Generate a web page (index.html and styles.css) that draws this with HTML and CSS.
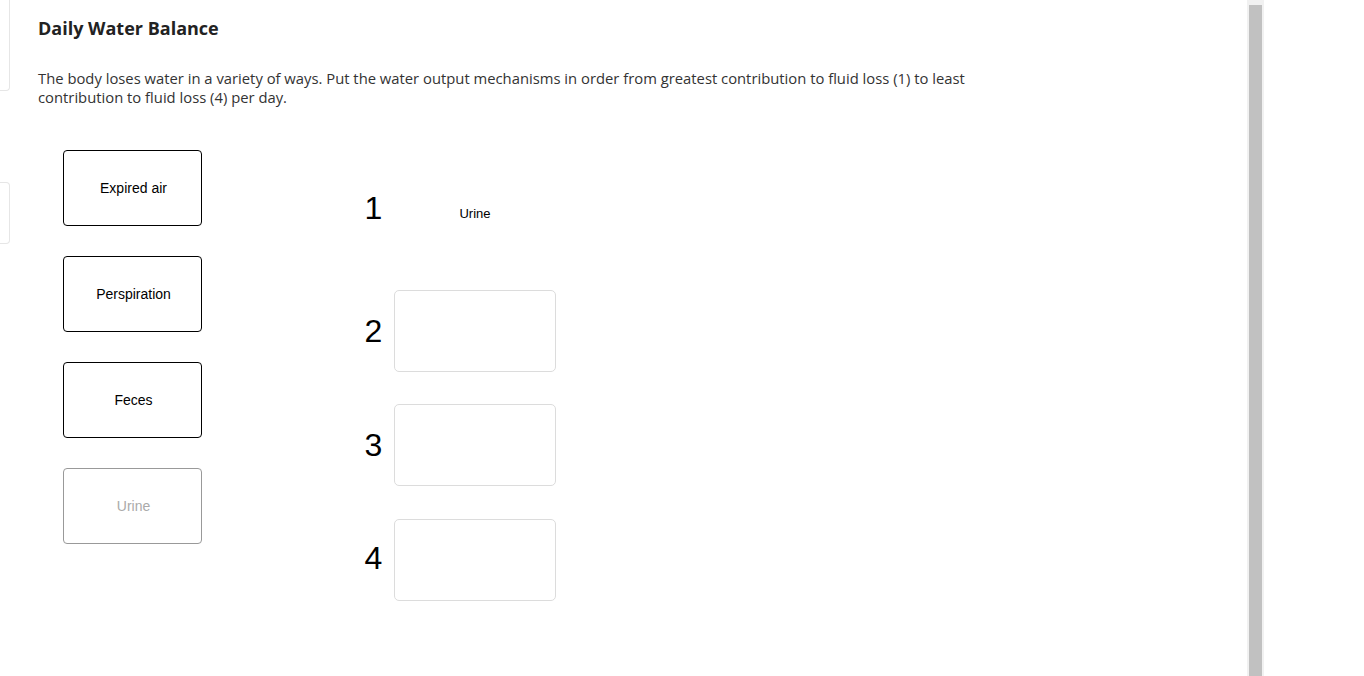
FILE: index.html
```html
<!DOCTYPE html>
<html lang="en">
<head>
<meta charset="utf-8">
<title>Daily Water Balance</title>
<link rel="stylesheet" href="styles.css">
</head>
<body>
<div class="frame">
  <div class="panel">
    <aside class="peek">
      <div class="peek-card peek-top"></div>
      <div class="peek-card peek-mid"></div>
    </aside>
    <main class="content">
      <h1 class="title">Daily Water Balance</h1>
      <p class="prompt">The body loses water in a variety of ways. Put the water output mechanisms in order from greatest contribution to fluid loss (1) to least contribution to fluid loss (4) per day.</p>
      <div class="activity">
        <div class="choices">
          <div class="card">Expired air</div>
          <div class="card">Perspiration</div>
          <div class="card">Feces</div>
          <div class="card card-used">Urine</div>
        </div>
        <div class="ranks">
          <div class="rank rank-filled">
            <span class="rank-num">1</span>
            <div class="slot slot-filled">Urine</div>
          </div>
          <div class="rank">
            <span class="rank-num">2</span>
            <div class="slot"></div>
          </div>
          <div class="rank rank-third">
            <span class="rank-num">3</span>
            <div class="slot"></div>
          </div>
          <div class="rank rank-last">
            <span class="rank-num">4</span>
            <div class="slot"></div>
          </div>
        </div>
      </div>
    </main>
  </div>
  <div class="scrollbar"><div class="thumb"></div></div>
  <div class="outside"></div>
</div>
</body>
</html>
```

FILE: styles.css
```css
* { box-sizing: border-box; }
html, body {
  margin: 0;
  padding: 0;
  background: #fff;
}
body {
  font-family: "Liberation Sans", Arial, sans-serif;
  color: #000;
}
.frame {
  display: flex;
  height: 676px;
  overflow: hidden;
}
.panel {
  width: 1247px;
  display: flex;
}
.peek {
  width: 10px;
  flex: none;
}
.peek-card {
  width: 10px;
  border: 1px solid #e6e6e6;
  border-left: none;
  border-radius: 0 4px 4px 0;
}
.peek-top {
  height: 91px;
  border-top: none;
  border-radius: 0 0 4px 0;
}
.peek-mid {
  margin-top: 91px;
  height: 62px;
}
.content {
  padding-left: 28px;
  flex: 1;
}
.title {
  margin: 16px 0 0;
  font-family: "Open Sans", "Liberation Sans", sans-serif;
  font-weight: 700;
  font-size: 18px;
  line-height: 24px;
  color: #222;
}
.prompt {
  margin: 29px 0 0;
  width: 945px;
  font-family: "Open Sans", "Liberation Sans", sans-serif;
  font-size: 14.8px;
  line-height: 19px;
  color: #333;
}
.activity {
  display: flex;
  margin-top: 43px;
  padding-left: 25px;
}
.choices {
  display: flex;
  flex-direction: column;
  gap: 30px;
  width: 139px;
}
.card {
  height: 76px;
  border: 1px solid #000;
  border-radius: 4px;
  display: flex;
  align-items: center;
  justify-content: center;
  padding-left: 2px;
  font-size: 14px;
  color: #000;
}
.card-used {
  border-color: #999;
  color: #aaa;
}
.ranks {
  margin-left: 158px;
  display: flex;
  flex-direction: column;
  padding-top: 25px;
}
.rank {
  display: flex;
  align-items: center;
  gap: 7px;
  margin-bottom: 32px;
}
.rank-third {
  margin-bottom: 33px;
}
.rank:last-child { margin-bottom: 0; }
.rank-num {
  width: 27px;
  text-align: center;
  font-size: 32px;
  line-height: 36px;
}
.rank-last .rank-num {
  margin-top: -4px;
}
.slot {
  width: 162px;
  height: 82px;
  border: 1px solid #dcdcdc;
  border-radius: 5px;
}
.rank-filled {
  align-items: flex-start;
  margin-bottom: 39px;
}
.rank-filled .rank-num {
  margin-top: 15px;
}
.slot-filled {
  height: 76px;
  border-color: transparent;
  display: flex;
  align-items: center;
  justify-content: center;
  font-size: 13px;
}
.scrollbar {
  width: 17px;
  flex: none;
  background: #f1f1f1;
  padding: 5px 2px 0;
}
.thumb {
  height: 100%;
  background: #c1c1c1;
}
.outside {
  flex: 1;
}
```
